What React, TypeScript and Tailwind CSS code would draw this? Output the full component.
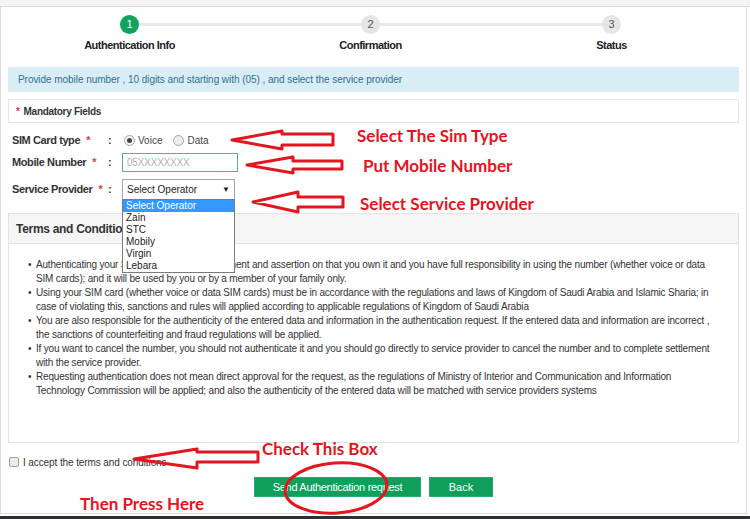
import React from "react";

const steps = [
  { n: 1, label: "Authentication Info", active: true },
  { n: 2, label: "Confirmation", active: false },
  { n: 3, label: "Status", active: false },
];

const terms: string[][] = [
  [
    "Authenticating your SIM card is acknowledgement and assertion on that you own it and you have full responsibility in using the number (whether voice or data",
    "SIM cards); and it will be used by you or by a member of your family only.",
  ],
  [
    "Using your SIM card (whether voice or data SIM cards) must be in accordance with the regulations and laws of Kingdom of Saudi Arabia and Islamic Sharia; in",
    "case of violating this, sanctions and rules will applied according to applicable regulations of Kingdom of Saudi Arabia",
  ],
  [
    "You are also responsible for the authenticity of the entered data and information in the authentication request. If the entered data and information are incorrect ,",
    "the sanctions of counterfeiting and fraud regulations will be applied.",
  ],
  [
    "If you want to cancel the number, you should not authenticate it and you should go directly to service provider to cancel the number and to complete settlement",
    "with the service provider.",
  ],
  [
    "Requesting authentication does not mean direct approval for the request, as the regulations of Ministry of Interior and Communication and Information",
    "Technology Commission will be applied; and also the authenticity of the entered data will be matched with service providers systems",
  ],
];

const operators = ["Select Operator", "Zain", "STC", "Mobily", "Virgin", "Lebara"];

function Label({ text }: { text: string }) {
  return (
    <div className="flex w-[94px] items-center text-[11px] font-bold tracking-[-0.4px] text-[#333]">
      {text}
      <span className="ml-[6px] text-[#e03a3a]">*</span>
    </div>
  );
}

function Colon() {
  return <div className="w-[16px] pl-[2px] text-[11px] font-bold text-[#333]">:</div>;
}

// left-pointing outline arrow like the hand drawn ones
function arrow(tx: number, ty: number, hx: number, ht: number, hb: number, st: number, sb: number, ex: number) {
  return `M${tx} ${ty} L${hx} ${ht} L${hx} ${st} L${ex} ${st} L${ex} ${sb} L${hx} ${sb} L${hx} ${hb} Z`;
}

export default function App() {
  return (
    <div className="relative flex h-[519px] w-[750px] flex-col overflow-hidden bg-white font-['Liberation_Sans',Arial,sans-serif] text-[#333]">
      <div className="h-[7px] shrink-0 border-b border-[#d8d8d8] bg-[#f4f4f4]" />

      <div className="mr-[3px] flex flex-1 flex-col border-x border-b border-[#dcdcdc] px-[7px]">
        {/* wizard steps */}
        <div className="relative mx-[1px] h-[54px] w-[723px]">
          <div className="absolute left-[121px] right-[121px] top-[16px] h-[3px] bg-[#e8e8e8]" />
          <div className="relative grid grid-cols-3">
            {steps.map((s) => (
              <div key={s.n} className="flex flex-col items-center">
                <div
                  className={
                    s.active
                      ? "mt-[8px] flex h-[19px] w-[19px] items-center justify-center rounded-full bg-[#0fa35e] text-[11px] text-white"
                      : "mt-[8px] flex h-[19px] w-[19px] items-center justify-center rounded-full bg-[#e6e6e6] text-[11px] text-[#555]"
                  }
                >
                  {s.n}
                </div>
                <div className="mt-[3px] text-[11px] font-bold tracking-[-0.5px] text-[#222]">{s.label}</div>
              </div>
            ))}
          </div>
        </div>

        <div className="mt-[6px] flex h-[25px] items-center bg-[#d9edf7] pl-[10px] text-[10px] tracking-[-0.05px] text-[#31708f]">
          Provide mobile number , 10 digits and starting with (05) , and select the service provider
        </div>

        <div className="mt-[7px] flex h-[24px] items-center border border-[#e6e6e6] pl-[7px] text-[10px] font-bold tracking-[-0.3px]">
          <span className="mr-[4px] text-[#e03a3a]">*</span>
          Mandatory Fields
        </div>

        {/* form */}
        <div className="mt-[8px] pl-[4px]">
          <div className="flex h-[18px] items-center">
            <Label text="SIM Card type" />
            <Colon />
            <div className="ml-[2px] flex items-center text-[10px] text-[#444]">
              <span className="flex h-[11px] w-[11px] items-center justify-center rounded-full border border-[#a8a8a8] bg-[#f4f4f4]">
                <span className="h-[5px] w-[5px] rounded-full bg-[#444]" />
              </span>
              <span className="ml-[3px]">Voice</span>
              <span className="ml-[11px] h-[11px] w-[11px] rounded-full border border-[#a8a8a8] bg-[#eee]" />
              <span className="ml-[3px]">Data</span>
            </div>
          </div>

          <div className="mt-[4px] flex h-[19px] items-center">
            <Label text="Mobile Number" />
            <Colon />
            <div className="flex h-[19px] w-[116px] items-center border border-[#5aaf8c] pl-[4px] text-[10px] tracking-[-0.2px] text-[#b0b0b0]">
              05XXXXXXXX
            </div>
          </div>

          <div className="mt-[7px] flex h-[21px] items-center">
            <Label text="Service Provider" />
            <Colon />
            <div className="relative">
              <div className="flex h-[21px] w-[113px] items-center justify-between border border-[#a6a6a6] px-[4px] text-[10px] text-[#222]">
                <span>Select Operator</span>
                <span className="text-[8px]">▼</span>
              </div>
              <div className="absolute left-0 top-[20px] z-10 w-[113px] border border-[#7a7a7a] bg-white text-[10px] text-[#222]">
                {operators.map((o, i) => (
                  <div
                    key={o}
                    className={i === 0 ? "h-[12px] bg-[#3399ff] pl-[3px] leading-[12px] text-white" : "h-[12px] pl-[3px] leading-[12px]"}
                  >
                    {o}
                  </div>
                ))}
              </div>
            </div>
          </div>
        </div>

        {/* terms */}
        <div className="mt-[13px] h-[230px] border border-[#e3e3e3]">
          <div className="flex h-[30px] items-center border-b border-[#e3e3e3] bg-[#f5f5f5] pl-[7px] text-[12px] font-bold tracking-[-0.3px] text-[#333]">
            Terms and Conditions
          </div>
          <ul className="pl-[19px] pt-[14px] text-[10px] leading-[14px] tracking-[-0.18px] text-[#333]">
            {terms.map((t, i) => (
              <li key={i} className="flex">
                <span className="w-[8px] shrink-0">•</span>
                <span className="whitespace-nowrap">
                  {t[0]}
                  <br />
                  {t[1]}
                </span>
              </li>
            ))}
          </ul>
        </div>

        <div className="mt-[13px] flex h-[12px] items-center pl-[1px]">
          <span className="h-[10px] w-[10px] rounded-[2px] border border-[#a0a0a0] bg-[#ececec]" />
          <span className="ml-[4px] text-[10px] tracking-[-0.1px] text-[#333]">I accept the terms and conditions</span>
        </div>

        <div className="mt-[9px] flex justify-center gap-[8px]">
          <div className="flex h-[20px] w-[167px] items-center justify-center border border-[#27ad6d] bg-[#0f9f5c] text-[11px] tracking-[-0.3px] text-white">
            Send Authentication request
          </div>
          <div className="flex h-[20px] w-[64px] items-center justify-center border border-[#27ad6d] bg-[#0f9f5c] text-[11px] text-white">
            Back
          </div>
        </div>
      </div>

      <div className="mt-[2px] h-[3px] shrink-0 bg-[#2b3136]" />

      {/* red annotations drawn over the screenshot */}
      <div className="pointer-events-none absolute inset-0 z-20">
        <svg width="750" height="519" className="absolute left-0 top-0" fill="none" stroke="#e3151e" strokeWidth="3" strokeLinejoin="round">
          <path d={arrow(232, 140, 282, 131, 149, 134, 145, 333)} />
          <path d={arrow(247, 165, 293, 157, 173, 161, 169, 342)} />
          <path d={arrow(253, 202, 298, 192, 212, 197, 207, 343)} />
          <path d={arrow(134, 459, 197, 449, 468, 452, 462, 258)} />
          <ellipse cx="336" cy="488" rx="51" ry="25" transform="rotate(-4 336 488)" />
        </svg>
        <div className="font-['Lato',sans-serif] text-[17px] font-bold leading-[17px] text-[#e3151e]">
          <span className="absolute left-[357px] top-[127px]">Select The Sim Type</span>
          <span className="absolute left-[363px] top-[157px]">Put Mobile Number</span>
          <span className="absolute left-[360px] top-[195px]">Select Service Provider</span>
          <span className="absolute left-[262px] top-[440px]">Check This Box</span>
          <span className="absolute left-[80px] top-[495px]">Then Press Here</span>
        </div>
      </div>
    </div>
  );
}
